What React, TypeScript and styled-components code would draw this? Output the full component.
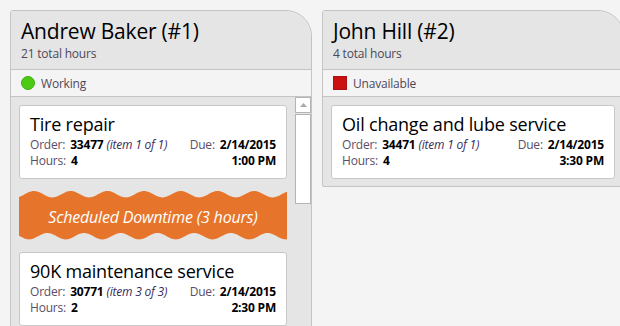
import styled, { createGlobalStyle } from "styled-components";

const GlobalStyle = createGlobalStyle`
  html, body {
    margin: 0;
    padding: 0;
    background: #f4f4f4;
    overflow: hidden;
  }
  body {
    font-family: "Open Sans", "Noto Sans", sans-serif;
    color: #000;
  }
`;

// board
const Board = styled.div`
  display: flex;
  gap: 10px;
  padding: 10px 0 0 10px;
  width: 620px;
  height: 326px;
  box-sizing: border-box;
  overflow: hidden;
`;

const Column = styled.section<{ $tall?: boolean }>`
  flex: 0 0 300px;
  display: flex;
  flex-direction: column;
  align-self: flex-start;
  height: ${(p) => (p.$tall ? "340px" : "auto")};
  border: 1px solid #c4c4c4;
  border-radius: 3px 26px 2px 2px;
  background: #e5e5e5;
  overflow: hidden;
`;

const Header = styled.header`
  height: 58px;
  padding: 0 10px;
  border-bottom: 1px solid #c4c4c4;
  background: #e5e5e5;
`;

const Name = styled.h1`
  margin: 0;
  padding-top: 8px;
  font-size: 21px;
  font-weight: 400;
  line-height: 24px;
  letter-spacing: -0.2px;
  color: #000;
`;

const TotalHours = styled.div`
  margin-top: 4px;
  font-size: 12px;
  line-height: 14px;
  color: #4d4858;
  letter-spacing: -0.2px;
`;

const StatusRow = styled.div`
  height: 26px;
  display: flex;
  align-items: center;
  gap: 6px;
  padding: 0 10px;
  background: #f4f4f4;
  border-bottom: 1px solid #c4c4c4;
  font-size: 12px;
  color: #4d4858;
  letter-spacing: -0.2px;
`;

const StatusDot = styled.span<{ $kind: "working" | "unavailable" }>`
  width: 14px;
  height: 14px;
  box-sizing: border-box;
  flex: 0 0 auto;
  border-radius: ${(p) => (p.$kind === "working" ? "50%" : "0")};
  background: ${(p) => (p.$kind === "working" ? "#4ccb14" : "#cc1111")};
  border: 1px solid ${(p) => (p.$kind === "working" ? "#3fae10" : "#a81212")};
`;

const Body = styled.div`
  flex: 1;
  display: flex;
  min-height: 0;
`;

const List = styled.div<{ $bottom?: number }>`
  flex: 1;
  display: flex;
  flex-direction: column;
  gap: 12px;
  padding: 8px 8px ${(p) => p.$bottom ?? 8}px 8px;
  min-width: 0;
`;

// scrollbar
const ScrollBar = styled.div`
  flex: 0 0 16px;
  display: flex;
  flex-direction: column;
  gap: 1px;
  background: #e5e5e5;
`;

const ScrollButton = styled.div`
  height: 16px;
  box-sizing: border-box;
  border: 1px solid #b4b4b4;
  background: #fff;
  display: flex;
  align-items: center;
  justify-content: center;
`;

const Thumb = styled.div`
  height: 90px;
  box-sizing: border-box;
  border: 1px solid #b4b4b4;
  background: #fff;
`;

// job card
const Card = styled.article`
  background: #fff;
  border: 1px solid #c8c8c8;
  border-radius: 3px;
  padding: 6px 10px 9px 10px;
`;

const JobTitle = styled.h2`
  margin: 0 0 1px;
  font-size: 18px;
  font-weight: 400;
  line-height: 24px;
  letter-spacing: -0.2px;
`;

const InfoRow = styled.div`
  display: flex;
  justify-content: space-between;
  font-size: 12px;
  line-height: 16px;
  letter-spacing: -0.2px;
`;

const Field = styled.span`
  display: flex;
  gap: 5px;
`;

const Label = styled.span`
  color: #5a4d66;
`;

const Value = styled.b`
  font-weight: 700;
  color: #000;
`;

const Note = styled.i`
  color: #3a2a5a;
`;

// downtime banner
const Downtime = styled.div`
  display: flex;
  flex-direction: column;
`;

const Wave = styled.svg`
  display: block;
  width: 100%;
  height: 7px;
`;

const DowntimeBody = styled.div`
  background: #e6752b;
  color: #fff;
  height: 35px;
  display: flex;
  align-items: center;
  justify-content: center;
  padding-top: 3px;
  box-sizing: border-box;
  font-size: 16px;
  font-style: italic;
  letter-spacing: -0.2px;
`;

const ORANGE = "#e6752b";

function wavePath(top: boolean) {
  const w = 268;
  const period = 36.7;
  const pts: string[] = [];
  for (let x = 0; x <= w; x += 1) {
    const y = top
      ? 3.2 - 3.2 * Math.cos((2 * Math.PI * (x - 15)) / period)
      : 3.2 + 3.2 * Math.cos((2 * Math.PI * (x - 10)) / period);
    pts.push(`${x},${y.toFixed(2)}`);
  }
  return top
    ? `M0,7 L${pts.join(" L")} L${w},7 Z`
    : `M0,0 L${pts.join(" L")} L${w},0 Z`;
}

function DowntimeBanner({ hours }: { hours: number }) {
  return (
    <Downtime>
      <Wave viewBox="0 0 268 7" preserveAspectRatio="none">
        <path d={wavePath(true)} fill={ORANGE} />
      </Wave>
      <DowntimeBody>Scheduled Downtime ({hours} hours)</DowntimeBody>
      <Wave viewBox="0 0 268 7" preserveAspectRatio="none">
        <path d={wavePath(false)} fill={ORANGE} />
      </Wave>
    </Downtime>
  );
}

interface Job {
  title: string;
  order: number;
  item: number;
  of: number;
  hours: number;
  date: string;
  time: string;
}

function JobCard({ job }: { job: Job }) {
  return (
    <Card>
      <JobTitle>{job.title}</JobTitle>
      <InfoRow>
        <Field>
          <Label>Order:</Label>
          <span>
            <Value>{job.order}</Value>{" "}
            <Note>
              (item {job.item} of {job.of})
            </Note>
          </span>
        </Field>
        <Field>
          <Label>Due:</Label>
          <Value>{job.date}</Value>
        </Field>
      </InfoRow>
      <InfoRow>
        <Field>
          <Label>Hours:</Label>
          <Value>{job.hours}</Value>
        </Field>
        <Value>{job.time}</Value>
      </InfoRow>
    </Card>
  );
}

export default function App() {
  return (
    <>
      <GlobalStyle />
      <Board>
        <Column $tall>
          <Header>
            <Name>Andrew Baker (#1)</Name>
            <TotalHours>21 total hours</TotalHours>
          </Header>
          <StatusRow>
            <StatusDot $kind="working" />
            Working
          </StatusRow>
          <Body>
            <List>
              <JobCard
                job={{ title: "Tire repair", order: 33477, item: 1, of: 1, hours: 4, date: "2/14/2015", time: "1:00 PM" }}
              />
              <DowntimeBanner hours={3} />
              <JobCard
                job={{ title: "90K maintenance service", order: 30771, item: 3, of: 3, hours: 2, date: "2/14/2015", time: "2:30 PM" }}
              />
            </List>
            <ScrollBar>
              <ScrollButton>
                <svg width="7" height="4" viewBox="0 0 7 4">
                  <path d="M0,4 L3.5,0 L7,4 Z" fill="#a8a8a8" />
                </svg>
              </ScrollButton>
              <Thumb />
            </ScrollBar>
          </Body>
        </Column>
        <Column>
          <Header>
            <Name>John Hill (#2)</Name>
            <TotalHours>4 total hours</TotalHours>
          </Header>
          <StatusRow>
            <StatusDot $kind="unavailable" />
            Unavailable
          </StatusRow>
          <Body>
            <List $bottom={7}>
              <JobCard
                job={{ title: "Oil change and lube service", order: 34471, item: 1, of: 1, hours: 4, date: "2/14/2015", time: "3:30 PM" }}
              />
            </List>
          </Body>
        </Column>
      </Board>
    </>
  );
}
